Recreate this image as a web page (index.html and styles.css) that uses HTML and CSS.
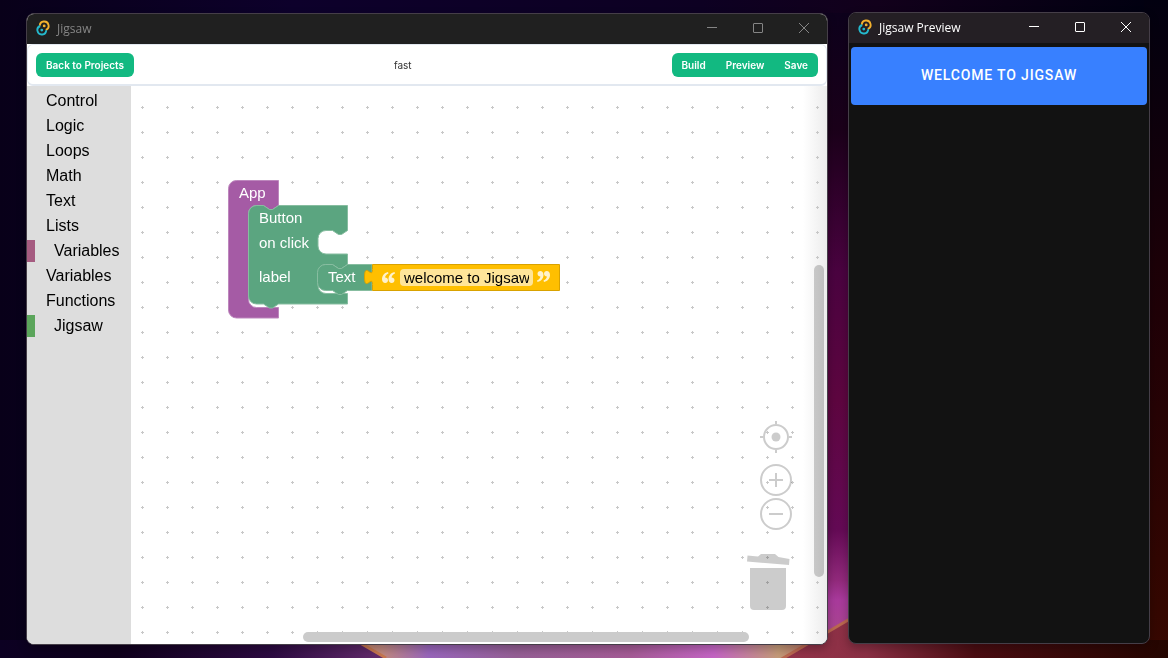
FILE: index.html
```html
<!DOCTYPE html>
<html lang="en">
<head>
<meta charset="utf-8">
<title>Jigsaw</title>
<link rel="stylesheet" href="styles.css">
</head>
<body>
<svg width="0" height="0" class="defs" aria-hidden="true">
  <symbol id="logo" viewBox="0 0 14 16">
    <path d="M3.800 5.800A4.400 4.400 0 1 1 9.800 10" fill="none" stroke="#f3b12d" stroke-width="1.900"/>
    <path d="M10.200 10.200A4.400 4.400 0 1 1 4.200 6" fill="none" stroke="#24b8cc" stroke-width="1.900"/>
    <circle cx="8.200" cy="5.900" r="1.400" fill="#f3b12d"/>
    <circle cx="5.800" cy="10.100" r="1.400" fill="#24b8cc"/>
  </symbol>
  <symbol id="min" viewBox="0 0 12 12"><path d="M1 5.500h10" stroke="currentColor"/></symbol>
  <symbol id="max" viewBox="0 0 12 12"><rect x="1.500" y="1.500" width="9" height="9" rx=".5" fill="none" stroke="currentColor"/></symbol>
  <symbol id="close" viewBox="0 0 12 12"><path d="M1 1l10 10M11 1L1 11" stroke="currentColor"/></symbol>
</svg>
<svg class="wallpaper" viewBox="0 0 1168 658" preserveAspectRatio="none" aria-hidden="true">
  <defs>
    <linearGradient id="sky" x1="0" x2="1" y1="0" y2="0">
      <stop offset="0" stop-color="#080019"/><stop offset=".25" stop-color="#0d002b"/><stop offset=".6" stop-color="#0d0022"/><stop offset=".75" stop-color="#12001b"/><stop offset="1" stop-color="#000010"/>
    </linearGradient>
    <linearGradient id="gap" x1="0" x2="0" y1="0" y2="1">
      <stop offset="0" stop-color="#0d001c"/><stop offset=".18" stop-color="#1b001a"/><stop offset=".4" stop-color="#4a0340"/><stop offset=".6" stop-color="#5e0640"/><stop offset=".8" stop-color="#640a55"/><stop offset=".88" stop-color="#922a7c"/><stop offset=".91" stop-color="#a93a9c"/><stop offset="1" stop-color="#a85084"/>
    </linearGradient>
    <linearGradient id="right" x1="0" x2="0" y1="0" y2="1">
      <stop offset="0" stop-color="#020010"/><stop offset=".4" stop-color="#1c0008"/><stop offset="1" stop-color="#380800"/>
    </linearGradient>
    <linearGradient id="bottom" x1="0" x2="1" y1="0" y2="0">
      <stop offset="0" stop-color="#0c0022"/><stop offset=".3" stop-color="#0f001c"/><stop offset=".7" stop-color="#2d0b42"/><stop offset="1" stop-color="#682e70"/>
    </linearGradient>
    <linearGradient id="glow" x1="0" x2="1" y1="0" y2="0">
      <stop offset="0" stop-color="#c88462"/><stop offset=".06" stop-color="#c08880"/><stop offset=".16" stop-color="#9865bb"/><stop offset=".35" stop-color="#955f95"/><stop offset=".6" stop-color="#a55b96"/><stop offset=".78" stop-color="#c464c4"/><stop offset=".92" stop-color="#c49a78"/><stop offset="1" stop-color="#b46860"/>
    </linearGradient>
    <linearGradient id="red" x1="0" x2="1" y1="0" y2="0">
      <stop offset="0" stop-color="#95344a"/><stop offset=".22" stop-color="#8a2f44"/><stop offset=".5" stop-color="#4a0d12"/><stop offset="1" stop-color="#240500"/>
    </linearGradient>
  </defs>
  <rect width="1168" height="658" fill="url(#sky)"/>
  <rect x="820" y="13" width="36" height="645" fill="url(#gap)"/>
  <rect x="1144" width="24" height="658" fill="url(#right)"/>
  <rect y="640" width="390" height="18" fill="url(#bottom)"/>
  <path d="M355 640H815L782 658H386z" fill="url(#glow)"/>
  <path d="M355 640L386 658" stroke="#c77750" stroke-width="3"/>
  <path d="M782 658L860 612V640H1168V658z" fill="url(#red)"/>
  <path d="M780 660L860 613" stroke="#bb6850" stroke-width="3"/>
</svg>
<main class="desktop">
  <section class="window editor">
    <header class="titlebar inactive">
      <svg class="logo"><use href="#logo"/></svg><h1>Jigsaw</h1>
      <button aria-label="Minimize"><svg><use href="#min"/></svg></button>
      <button aria-label="Maximize"><svg><use href="#max"/></svg></button>
      <button aria-label="Close"><svg><use href="#close"/></svg></button>
    </header>
    <nav class="toolbar">
      <button class="action">Back to Projects</button>
      <span class="project">fast</span>
      <div class="group"><button>Build</button><button>Preview</button><button>Save</button></div>
    </nav>
    <div class="work">
      <ul class="toolbox">
        <li>Control</li><li>Logic</li><li>Loops</li><li>Math</li><li>Text</li><li>Lists</li>
        <li class="marked plum">Variables</li><li>Variables</li><li>Functions</li><li class="marked green">Jigsaw</li>
      </ul>
      <div class="canvas">
        <svg class="grid" aria-hidden="true">
          <defs><pattern id="dots" width="25" height="25" patternUnits="userSpaceOnUse"><path d="M10 21.500h3M11.500 20v3" stroke="#c8c8c8"/></pattern></defs>
          <rect width="100%" height="100%" fill="url(#dots)"/>
        </svg>
        <svg class="blocks" width="340" height="145" viewBox="228 179 340 145">
          <path class="app" d="M228.500 188.500a8 8 0 0 1 8-8H278.500V205.500l-6 4h-3l-6-4H256.500a8 8 0 0 0-8 8V299.500a8 8 0 0 0 8 8H278.500V318H236.500a8 8 0 0 1-8-8z"/>
          <path class="component" d="M248.500 213.500a8 8 0 0 1 8-8H263.500l6 4h3l6-4H347.500V230.500l-6 4h-3l-6-4H326a8 8 0 0 0-8 8V246a8 8 0 0 0 8 8H347.500V264.500l-6 4h-3l-6-4H326a8 8 0 0 0-8 8V285.500a8 8 0 0 0 8 8H347.500V304H278.500l-6 4h-3l-6-4H256.500a8 8 0 0 1-8-8z"/>
          <path class="component" d="M317.500 272.500a8 8 0 0 1 8-8H332.500l6 4h3l6-4H372V290.500H347.500l-6 4h-3l-6-4H325.500a8 8 0 0 1-8-8z"/>
          <path class="string" d="M372.500 264.500H559.500V290.500H372.500V284.500c0-10-8 8-8-7.500s8 2.500 8-7.500z"/>
          <g class="quote"><path id="open" d="M388 272c-4 1-6 4-6 7 0 2.500 1.500 4 3.200 4 1.700 0 2.800-1.200 2.800-2.800s-1.200-2.700-2.900-2.700c.2-1.700 1.200-3 3.400-4zM394.500 272c-4 1-6 4-6 7 0 2.500 1.500 4 3.200 4 1.700 0 2.800-1.200 2.800-2.800s-1.200-2.700-2.900-2.700c.2-1.700 1.200-3 3.400-4z"/><use href="#open" transform="rotate(180 466 277)"/></g>
          <g class="labels"><text x="239" y="198">App</text><text x="259" y="223">Button</text><text x="259" y="248">on click</text><text x="259" y="282">label</text><text x="328" y="282">Text</text></g>
          <foreignObject x="400" y="269" width="133" height="17"><input class="field" aria-label="Text value" value="welcome to Jigsaw"></foreignObject>
        </svg>
        <div class="controls">
          <button class="center" aria-label="Center"><svg width="32" height="32"><path fill="none" stroke="currentColor" stroke-width="2" d="M16 4a12 12 0 1 0 0 24a12 12 0 1 0 0-24zM16 0v3M16 29v3M0 16h3M29 16h3"/><circle cx="16" cy="16" r="4.500" fill="currentColor"/></svg></button>
          <button aria-label="Zoom in"><svg width="32" height="32"><path fill="none" stroke="currentColor" stroke-width="2" d="M16 1a15 15 0 1 0 0 30a15 15 0 1 0 0-30zM9 16h14M16 9v14"/></svg></button>
          <button aria-label="Zoom out"><svg width="32" height="32"><path fill="none" stroke="currentColor" stroke-width="2" d="M16 1a15 15 0 1 0 0 30a15 15 0 1 0 0-30zM9 16h14"/></svg></button>
          <button class="trash" aria-label="Trash"><svg width="46" height="56"><path fill="currentColor" d="M1.500 1.500L12 2.500 15 0H29L32.500 3 43.500 5 43 11 1 7.500zM4 14H40V52a4 4 0 0 1-4 4H8a4 4 0 0 1-4-4z"/></svg></button>
        </div>
        <div class="scroll vertical"></div><div class="scroll horizontal"></div>
      </div>
    </div>
  </section>
  <section class="window preview">
    <header class="titlebar">
      <svg class="logo"><use href="#logo"/></svg><h2>Jigsaw Preview</h2>
      <button aria-label="Minimize"><svg><use href="#min"/></svg></button>
      <button aria-label="Maximize"><svg><use href="#max"/></svg></button>
      <button aria-label="Close"><svg><use href="#close"/></svg></button>
    </header>
    <div class="screen"><button class="welcome">WELCOME TO JIGSAW</button></div>
  </section>
</main>
</body>
</html>
```
FILE: styles.css
```css
* { box-sizing: border-box; }
body { margin: 0; min-height: 100vh; font-family: "Liberation Sans", Arial, sans-serif; }
button { border: 0; padding: 0; background: none; color: inherit; font: inherit; }
button svg { display: block; }
.defs { position: absolute; }
.wallpaper { position: fixed; inset: 0; width: 100%; height: 100%; z-index: -1; }
.desktop { display: flex; gap: 20px; min-height: 100vh; padding: 12px 18px 14px 26px; }
.window { display: flex; flex-direction: column; overflow: hidden; border: 1px solid #453e48; border-radius: 8px; box-shadow: 0 4px 10px #0004; }
.editor { flex: 1; margin: 1px 0 -1px; background: #fff; }
.preview { flex: 0 0 302px; background: #121212; }

.titlebar { display: flex; align-items: center; height: 30px; padding-left: 9px; background: #241f24; color: #fff; font-family: "Open Sans", "Noto Sans", sans-serif; font-size: 12px; }
.titlebar.inactive { background: #202020; color: #858585; }
.titlebar h1, .titlebar h2 { flex: 1; margin: 0 0 0 7px; padding-bottom: 1px; font-size: 12px; line-height: 16px; font-weight: 400; }
.titlebar button { display: grid; place-items: center; width: 46px; height: 28px; margin-bottom: 2px; }
.titlebar button svg { width: 12px; height: 12px; }
.logo { width: 14px; height: 16px; margin-bottom: 2px; }

.toolbar { display: flex; justify-content: space-between; align-items: center; height: 42px; padding: 1px 8px 0; border: 1px solid #e2e8f0; border-bottom-width: 2px; border-radius: 6px; font-family: Inter, sans-serif; font-size: 10px; color: #333; }
.action, .group { height: 24px; border-radius: 6px; background: #12b981; color: #fff; font-weight: 600; }
.action { padding: 0 10px; }
.group { display: flex; }
.group button { padding: 0 10px; }

.work { display: flex; flex: 1; }
.toolbox { width: 104px; margin: 0; padding: 4px 0; background: #ddd; list-style: none; font-size: 16px; color: #000; }
.toolbox li { height: 22px; margin-bottom: 3px; padding-left: 19px; line-height: 22px; }
.toolbox .marked { border-left: 8px solid; }
.toolbox .plum { border-color: #a55b80; }
.toolbox .green { border-color: #5ba55b; }

.canvas { position: relative; flex: 1; background: linear-gradient(to left, #ececec, #fff 24px); }
.grid { position: absolute; inset: 0; width: 100%; height: 100%; }
.blocks { position: absolute; left: 97px; top: 93px; }
.app { fill: #a55ba5; stroke: #bd87bd; }
.component { fill: #5ba580; stroke: #87bda0; }
.string { fill: #ffbf00; stroke: #d9a200; }
.quote { fill: #fff; opacity: .8; }
.labels { fill: #fff; font-size: 15px; }
.field { display: block; width: 133px; height: 17px; padding: 0 4px; border: 0; border-radius: 4px; background: #ffe599; color: #000; font-family: "Liberation Sans", Arial, sans-serif; font-size: 15px; line-height: 17px; }
.controls { position: absolute; right: 35px; bottom: 34px; display: flex; flex-direction: column; align-items: flex-end; gap: 2px; color: #0003; }
.controls .center { margin-bottom: 9px; }
.controls .trash { margin-top: 22px; }
.scroll { position: absolute; border-radius: 5px; background: #cbcbcb; }
.vertical { right: 3px; top: 32%; bottom: 12%; width: 10px; background: linear-gradient(to right, #c8c8c8, #bfbfbf); }
.horizontal { left: 172px; right: 78px; bottom: 2px; height: 10px; }

.screen { flex: 1; padding: 4px 2px; }
.welcome { display: block; width: 100%; height: 58px; padding-bottom: 2px; border-radius: 4px; background: #3880ff; color: #fff; font-family: Roboto, sans-serif; font-size: 14px; font-weight: 500; letter-spacing: 0.06em; }
```
